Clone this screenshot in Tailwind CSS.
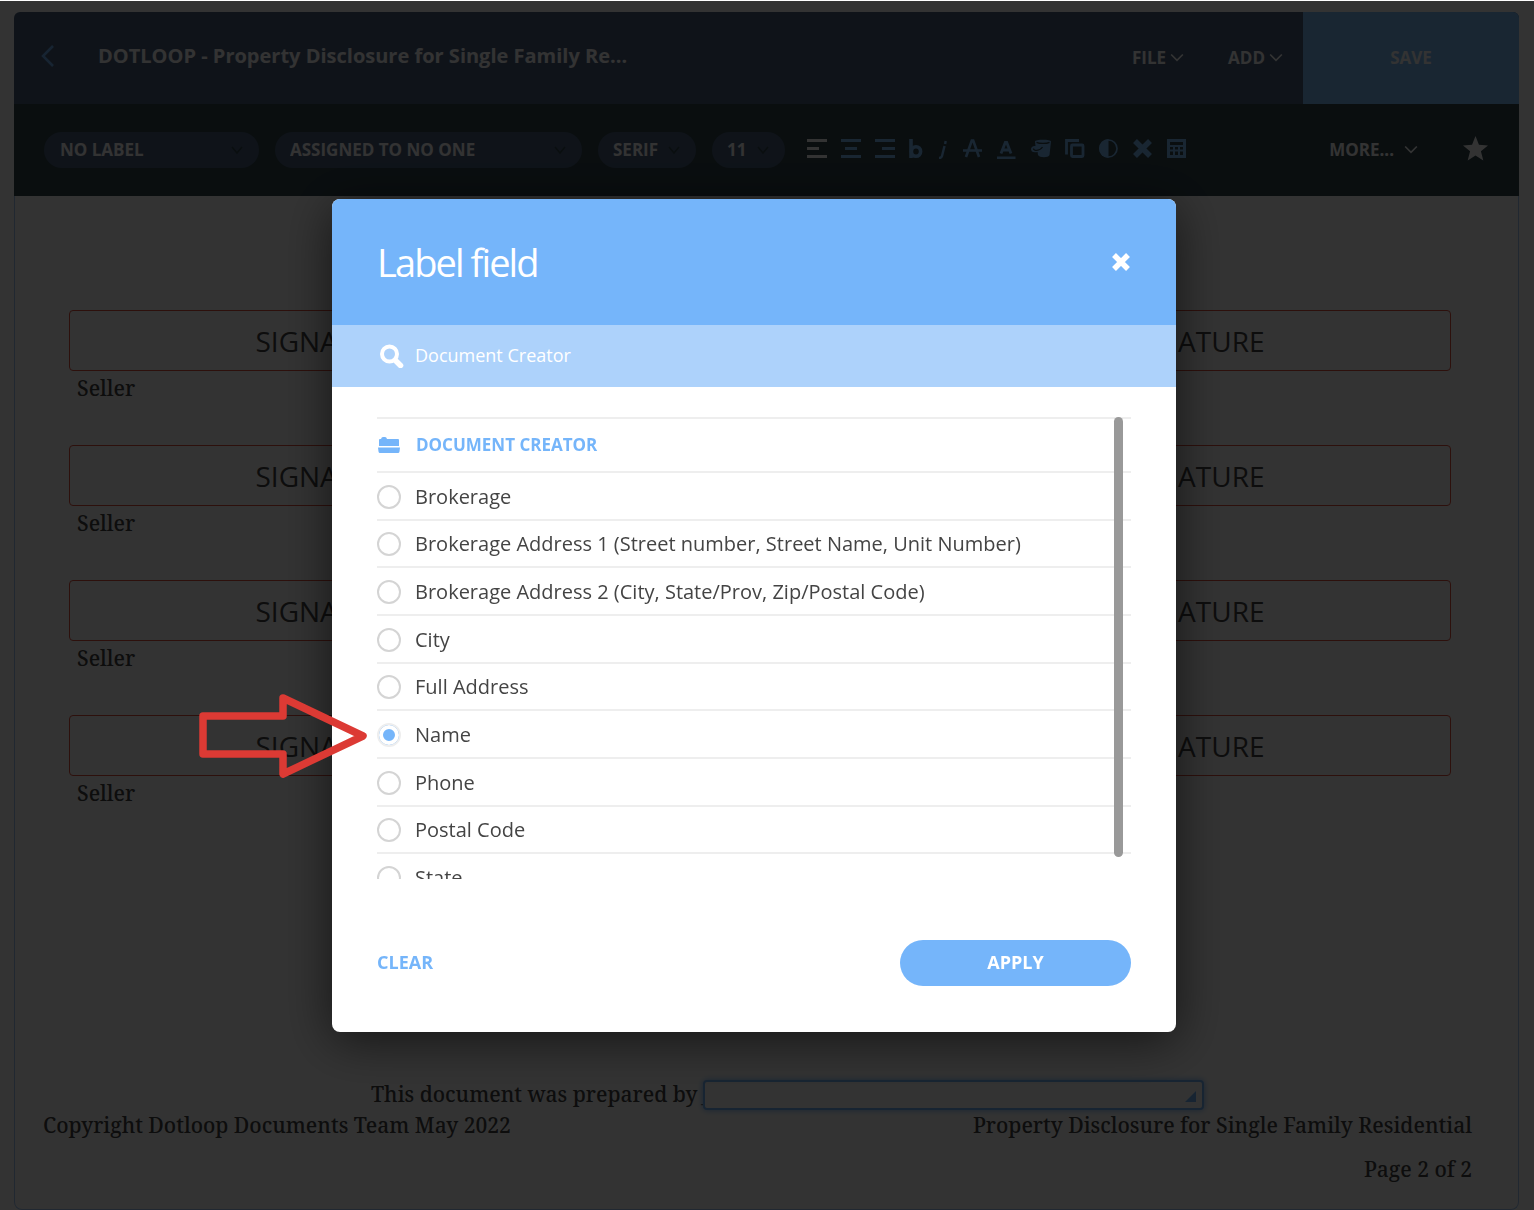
<!DOCTYPE html>
<html lang="en">
<head>
  <meta charset="UTF-8">
  <meta name="viewport" content="width=device-width, initial-scale=1.0">
  <title>Property Disclosure for Single Family Residential</title>
  <script src="https://cdn.jsdelivr.net/npm/@tailwindcss/browser@4"></script>
</head>
<body class="min-h-screen bg-white px-[14px] pt-3 font-['Open_Sans',sans-serif] text-[17px]">

  <!-- Document editor -->
  <div class="mr-px flex min-h-[calc(100vh-12px)] flex-col rounded-b-lg">

    <header class="flex h-[92px] items-stretch overflow-hidden rounded-t-md bg-[#4b627f] text-white">
      <button aria-label="Back" class="ml-6 w-5 pb-1 text-[#75b5fa]">
        <svg class="h-6 w-5" viewBox="0 0 20 24" fill="none" stroke="currentColor" stroke-width="2.5"><path d="M15 2 5 12l10 10"/></svg>
      </button>
      <h1 class="ml-10 flex-1 self-center pb-1 text-xl font-bold">DOTLOOP - Property Disclosure for Single Family Re...</h1>
      <button class="mr-11 flex items-center gap-1 font-bold">FILE
        <svg class="size-[14px]" viewBox="0 0 12 12" fill="none" stroke="currentColor" stroke-width="1.4"><path d="m1 3 5 5 5-5"/></svg>
      </button>
      <button class="mr-5 flex items-center gap-1 font-bold">ADD
        <svg class="size-[14px]" viewBox="0 0 12 12" fill="none" stroke="currentColor" stroke-width="1.4"><path d="m1 3 5 5 5-5"/></svg>
      </button>
      <button class="w-[216px] bg-[#7dbefa] font-bold">SAVE</button>
    </header>

    <div class="flex h-[92px] items-center bg-[#32464e] pl-[30px] text-white">
      <div class="flex gap-4 font-bold">
        <div class="relative w-[215px]">
          <select aria-label="Label" class="h-9 w-full appearance-none rounded-full bg-[#4b627f] pl-4"><option>NO LABEL</option></select>
          <svg class="pointer-events-none absolute top-3 right-4 size-3" viewBox="0 0 12 12" fill="none" stroke="#32464e" stroke-width="1.6"><path d="m1 3 5 6 5-6"/></svg>
        </div>
        <div class="relative w-[307px]">
          <select aria-label="Assignee" class="h-9 w-full appearance-none rounded-full bg-[#4b627f] pl-[15px]"><option>ASSIGNED TO NO ONE</option></select>
          <svg class="pointer-events-none absolute top-3 right-4 size-3" viewBox="0 0 12 12" fill="none" stroke="#32464e" stroke-width="1.6"><path d="m1 3 5 6 5-6"/></svg>
        </div>
        <div class="relative w-[98px]">
          <select aria-label="Font" class="h-9 w-full appearance-none rounded-full bg-[#4b627f] pl-[15px]"><option>SERIF</option></select>
          <svg class="pointer-events-none absolute top-3 right-4 size-3" viewBox="0 0 12 12" fill="none" stroke="#32464e" stroke-width="1.6"><path d="m1 3 5 6 5-6"/></svg>
        </div>
        <div class="relative w-[73px]">
          <select aria-label="Font size" class="h-9 w-full appearance-none rounded-full bg-[#4b627f] pl-[15px]"><option>11</option></select>
          <svg class="pointer-events-none absolute top-3 right-4 size-3" viewBox="0 0 12 12" fill="none" stroke="#32464e" stroke-width="1.6"><path d="m1 3 5 6 5-6"/></svg>
        </div>
      </div>

      <div class="ml-[22px] flex gap-[14px] pb-0.5 text-[#7dbefa]">
        <button aria-label="Align left" class="text-white"><svg class="size-5" viewBox="0 0 20 20" fill="currentColor"><path d="M0 0h20v3H0zM0 8h12v3H0zM0 16h20v3H0z"/></svg></button>
        <button aria-label="Align center"><svg class="size-5" viewBox="0 0 20 20" fill="currentColor"><path d="M0 0h20v3H0zM4 8h12v3H4zM0 16h20v3H0z"/></svg></button>
        <button aria-label="Align right"><svg class="size-5" viewBox="0 0 20 20" fill="currentColor"><path d="M0 0h20v3H0zM7 8h13v3H7zM0 16h20v3H0z"/></svg></button>
        <button aria-label="Bold"><svg class="h-5 w-[14px]" viewBox="0 0 14 20" fill="none" stroke="currentColor" stroke-width="3.6"><path d="M2 0v19"/><ellipse cx="7" cy="12.5" rx="4.6" ry="4.8"/></svg></button>
        <button aria-label="Italic"><svg class="h-5 w-3" viewBox="0 0 12 20" fill="none" stroke="currentColor" stroke-width="2.4"><path d="M7.500 7 5 17q-.5 2-3 2M8.700 2l-.6 3"/></svg></button>
        <button aria-label="Strikethrough"><svg class="size-5" viewBox="0 0 20 20" fill="none" stroke="currentColor" stroke-width="2.600"><path d="M3 18 8.800 1.500h1.400L16 18M0 11.500h19"/></svg></button>
        <button aria-label="Text color"><svg class="size-5" viewBox="0 0 20 20" fill="none" stroke="currentColor" stroke-width="2.800"><path d="M4 14.500 8.300 3.500h1.400L14 14.500M6 11h6.500M0 19h18.500"/></svg></button>
        <button aria-label="Fill"><svg class="size-5" viewBox="0 0 20 20"><path fill="currentColor" d="M4 2.500C4 .2 20 .2 20 2.500L18.500 16c-1 3-10 3-11.500 0l-.4-3C2 14 0 12.500 0 10c0-2 2-3.500 4.500-3z"/><path fill="none" stroke="#32464e" stroke-width="1.300" d="M5.500 3.300c3 1.500 10 1.500 13 0M2.500 9.500c0 2.500 6 3 9-1.500"/></svg></button>
        <button aria-label="Copy"><svg class="size-5" viewBox="0 0 20 20" fill="none" stroke="currentColor" stroke-width="2.800"><path d="M1.500 15.500V1.500H14"/><rect x="6.500" y="6" width="11.500" height="11.500" rx="1"/></svg></button>
        <button aria-label="Contrast"><svg class="size-5" viewBox="0 0 20 20"><circle cx="9.500" cy="9.500" r="8.500" fill="none" stroke="currentColor" stroke-width="1.700"/><path fill="currentColor" d="M9.500 0a9.500 9.500 0 0 0 0 19z"/></svg></button>
        <button aria-label="Remove"><svg class="size-5" viewBox="0 0 20 20" fill="none" stroke="currentColor" stroke-width="5.500"><path d="m2 2 15 15m0-15-15 15"/></svg></button>
        <button aria-label="Calculate"><svg class="size-5" viewBox="0 0 20 20" fill="currentColor"><path fill-rule="evenodd" d="M0 0h19v19H0zM3 3v3h13V3zM3 8v2.500h3V8zM8 8v2.500h3V8zM13 8v2.500h3V8zM3 12.500V16h3v-3.500zM8 12.500V16h3v-3.500zM13 12.500V16h3v-3.500z"/></svg></button>
      </div>

      <button class="ml-auto flex items-center gap-2.5 font-bold">MORE...
        <svg class="size-[14px]" viewBox="0 0 12 12" fill="none" stroke="currentColor" stroke-width="1.400"><path d="m1 3 5 5 5-5"/></svg>
      </button>
      <button aria-label="Favorite" class="mr-[31px] ml-[45px] pb-1"><svg class="size-[25px]" viewBox="0 0 24 24" fill="currentColor"><path d="m12 0 3.300 8.500L24 9l-6.800 5.600L19.500 23.500 12 18.600 4.500 23.500l2.300-8.900L0 9l8.700-.5z"/></svg></button>
    </div>

    <!-- Page 2 -->
    <main class="flex flex-1 flex-col rounded-b-lg border-x border-b border-[#a5c8f5] font-['Noto_Serif','Liberation_Serif',serif] text-[21px] font-medium text-[#444]">
      <div class="mr-[67px] ml-[54px] pt-[114px]">
        <div class="flex h-[135px] justify-between">
          <div class="w-[524px]">
            <button class="h-[61px] w-full rounded border border-[#e0503d] font-['Open_Sans',sans-serif] text-[28px] font-normal">SIGNATURE</button>
            <p class="ml-2 leading-[34px]">Seller</p>
          </div>
          <button class="h-[61px] w-[524px] rounded border border-[#e0503d] font-['Open_Sans',sans-serif] text-[28px] font-normal">SIGNATURE</button>
        </div>
        <div class="flex h-[135px] justify-between">
          <div class="w-[524px]">
            <button class="h-[61px] w-full rounded border border-[#e0503d] font-['Open_Sans',sans-serif] text-[28px] font-normal">SIGNATURE</button>
            <p class="ml-2 leading-[34px]">Seller</p>
          </div>
          <button class="h-[61px] w-[524px] rounded border border-[#e0503d] font-['Open_Sans',sans-serif] text-[28px] font-normal">SIGNATURE</button>
        </div>
        <div class="flex h-[135px] justify-between">
          <div class="w-[524px]">
            <button class="h-[61px] w-full rounded border border-[#e0503d] font-['Open_Sans',sans-serif] text-[28px] font-normal">SIGNATURE</button>
            <p class="ml-2 leading-[34px]">Seller</p>
          </div>
          <button class="h-[61px] w-[524px] rounded border border-[#e0503d] font-['Open_Sans',sans-serif] text-[28px] font-normal">SIGNATURE</button>
        </div>
        <div class="flex h-[135px] justify-between">
          <div class="w-[524px]">
            <button class="h-[61px] w-full rounded border border-[#e0503d] font-['Open_Sans',sans-serif] text-[28px] font-normal">SIGNATURE</button>
            <p class="ml-2 leading-[34px]">Seller</p>
          </div>
          <button class="h-[61px] w-[524px] rounded border border-[#e0503d] font-['Open_Sans',sans-serif] text-[28px] font-normal">SIGNATURE</button>
        </div>
      </div>

      <footer class="mt-auto mr-[46px] mb-[25px] ml-7">
        <div class="flex h-[30px] items-center justify-end">
          <label for="preparedBy" class="mr-1">This document was prepared by</label>
          <span>_</span>
          <div class="relative mr-[268px] -ml-2 w-[501px]">
            <input id="preparedBy" type="text" class="block h-[30px] w-full rounded border-2 border-[#75b5fa] bg-white shadow-[0_0_6px_#75b5fa]">
            <svg class="absolute right-2 bottom-2 size-[11px]" viewBox="0 0 11 11" fill="#75b5fa"><path d="M11 0v11H0z"/></svg>
          </div>
        </div>
        <div class="flex justify-between leading-[30px]">
          <p>Copyright Dotloop Documents Team May 2022</p>
          <p>Property Disclosure for Single Family Residential</p>
        </div>
        <p class="mt-[14px] text-right leading-[30px]">Page 2 of 2</p>
      </footer>
    </main>
  </div>

  <!-- Label field dialog -->
  <div class="fixed inset-x-0 top-px bottom-0 flex items-start justify-center bg-black/80 pt-[198px] pr-[26px]">
    <form role="dialog" aria-labelledby="dialogTitle" class="relative w-[844px] rounded-lg bg-white text-[20px] text-[#444] shadow-[0_8px_50px_rgba(0,0,0,0.6)]">
      <div class="flex h-[126px] items-center justify-between rounded-t-lg bg-[#75b5fa] px-[45px] text-white">
        <h2 id="dialogTitle" class="text-[38px] tracking-tighter">Label field</h2>
        <button type="button" aria-label="Close"><svg class="size-5" viewBox="0 0 20 20" fill="none" stroke="currentColor" stroke-width="5.500"><path d="m3 3 14 14m0-14L3 17"/></svg></button>
      </div>

      <div class="flex h-[62px] items-center bg-[#add2fb] px-12 text-white">
        <svg class="size-6" viewBox="0 0 24 24" fill="none" stroke="currentColor"><circle cx="9.500" cy="10" r="7.500" stroke-width="4"/><path stroke-width="5.500" stroke-linecap="round" d="m16 17 4.500 4.500"/></svg>
        <input type="text" aria-label="Search labels" value="Document Creator" class="ml-[11px] flex-1 bg-transparent pb-0.5 text-lg outline-none">
      </div>

      <div class="relative mx-[45px] mt-[30px] h-[462px] overflow-hidden">
        <h3 class="flex h-14 items-center border-y-2 border-[#eee] text-[17px] font-bold text-[#75b5fa]">
          <svg class="mr-4 ml-px h-4 w-[22px]" viewBox="0 0 22 16" fill="currentColor"><path d="M1 9V3q0-1 1-1h1q.5-2 2-2h2q1.500 0 2 2h11q1 0 1 1v6zM0 10.500h22l-.5 4q-.2 1.500-1.500 1.500H2Q.7 16 .5 14.500z"/></svg>
          DOCUMENT CREATOR
        </h3>
        <div class="grid h-[429px] grid-rows-9">
          <label class="flex items-center gap-[14px] border-b-2 border-[#eee] pt-0.5"><input type="radio" name="field" class="size-6 appearance-none rounded-full border-2 border-[#d4d4d4]">Brokerage</label>
          <label class="flex items-center gap-[14px] border-b-2 border-[#eee] pt-0.5"><input type="radio" name="field" class="size-6 appearance-none rounded-full border-2 border-[#d4d4d4]">Brokerage Address 1 (Street number, Street Name, Unit Number)</label>
          <label class="flex items-center gap-[14px] border-b-2 border-[#eee] pt-0.5"><input type="radio" name="field" class="size-6 appearance-none rounded-full border-2 border-[#d4d4d4]">Brokerage Address 2 (City, State/Prov, Zip/Postal Code)</label>
          <label class="flex items-center gap-[14px] border-b-2 border-[#eee] pt-0.5"><input type="radio" name="field" class="size-6 appearance-none rounded-full border-2 border-[#d4d4d4]">City</label>
          <label class="flex items-center gap-[14px] border-b-2 border-[#eee] pt-0.5"><input type="radio" name="field" class="size-6 appearance-none rounded-full border-2 border-[#d4d4d4]">Full Address</label>
          <label class="flex items-center gap-[14px] border-b-2 border-[#eee] pt-0.5"><input type="radio" name="field" checked class="size-6 appearance-none rounded-full border-2 border-[#eee] bg-[#75b5fa] shadow-[inset_0_0_0_4px_white]">Name</label>
          <label class="flex items-center gap-[14px] border-b-2 border-[#eee] pt-0.5"><input type="radio" name="field" class="size-6 appearance-none rounded-full border-2 border-[#d4d4d4]">Phone</label>
          <label class="flex items-center gap-[14px] border-b-2 border-[#eee] pt-0.5"><input type="radio" name="field" class="size-6 appearance-none rounded-full border-2 border-[#d4d4d4]">Postal Code</label>
          <label class="flex items-center gap-[14px] border-b-2 border-[#eee] pt-0.5"><input type="radio" name="field" class="size-6 appearance-none rounded-full border-2 border-[#d4d4d4]">State</label>
        </div>
        <div class="absolute top-0 right-2 h-[440px] w-[9px] rounded-full bg-[#999]"></div>
      </div>

      <div class="flex items-center justify-between px-[45px] pt-[61px] pb-[46px] text-lg font-bold">
        <button type="button" class="pb-0.5 text-[#75b5fa]">CLEAR</button>
        <button type="submit" class="h-[46px] w-[231px] rounded-full bg-[#75b5fa] pb-0.5 text-white">APPLY</button>
      </div>

      <!-- Callout arrow -->
      <svg class="absolute top-[493px] -left-[134px] h-[88px] w-[172px]" viewBox="0 0 172 88" fill="none" stroke="#dc3a34" stroke-width="7.500" stroke-linejoin="round"><path d="M5 24h80V6l80 38-80 38V62H5z"/></svg>
    </form>
  </div>

</body>
</html>
